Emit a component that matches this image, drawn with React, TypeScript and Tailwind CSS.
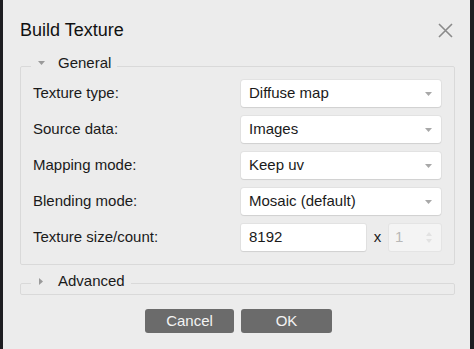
import React from "react";

const rows = [
  { label: "Texture type:", value: "Diffuse map" },
  { label: "Source data:", value: "Images" },
  { label: "Mapping mode:", value: "Keep uv" },
  { label: "Blending mode:", value: "Mosaic (default)" },
];

function DownArrow({ color = "#a8a8a8" }: { color?: string }) {
  return (
    <svg width="7" height="4" viewBox="0 0 7 4">
      <path d="M0 0 L7 0 L3.5 4 Z" fill={color} />
    </svg>
  );
}

function Combo({ value }: { value: string }) {
  return (
    <div className="h-[27px] w-[200px] flex items-center justify-between rounded-[3px] bg-white pl-[8px] pr-[9px] shadow-[0_0_0_1px_rgba(0,0,0,0.04),0_1px_1px_rgba(0,0,0,0.08)]">
      <span className="text-[15px] text-[#1a1a1a]">{value}</span>
      <DownArrow />
    </div>
  );
}

export default function App() {
  return (
    <div
      className="w-[474px] h-[349px] flex bg-[#1d1d21] overflow-hidden"
      style={{ fontFamily: '"Liberation Sans", Arial, sans-serif' }}
    >
      <div className="w-[3px] shrink-0" />
      <div className="flex-1 flex flex-col bg-[#ececec] pl-[17px] pr-[15px]">
        {/* 标题栏 */}
        <div className="mt-[19px] h-[22px] flex items-center justify-between pr-[2px]">
          <span className="text-[18px] leading-[22px] text-[#111]">Build Texture</span>
          <svg width="15" height="15" viewBox="0 0 15 15" className="mt-[1px]">
            <path d="M1 1 L14 14 M14 1 L1 14" stroke="#8a8a8a" strokeWidth="1.6" />
          </svg>
        </div>

        {/* General */}
        <fieldset className="mt-[13px] border border-[#d9d9d9] rounded-[2px]">
          <legend className="ml-[10px] pl-[7px] pr-[6px] pb-[6px] flex items-center">
            <DownArrow color="#9a9a9a" />
            <span className="ml-[13px] text-[15px] leading-[18px] text-[#1a1a1a]">General</span>
          </legend>
          <div className="flex flex-col gap-[9px] pl-[12px] pr-[13px] pt-[2px] pb-[13px]">
            {rows.map((r) => (
              <div key={r.label} className="flex items-center">
                <span className="flex-1 text-[15px] text-[#1a1a1a]">{r.label}</span>
                <Combo value={r.value} />
              </div>
            ))}
            <div className="flex items-center">
              <span className="flex-1 text-[15px] text-[#1a1a1a]">Texture size/count:</span>
              <div className="w-[200px] flex items-center">
                <div className="h-[27px] w-[125px] flex items-center rounded-[2px] bg-white pl-[8px] shadow-[0_0_0_1px_rgba(0,0,0,0.04),0_1px_1px_rgba(0,0,0,0.08)]">
                  <span className="text-[15px] text-[#1a1a1a]">8192</span>
                </div>
                <span className="w-[23px] text-center text-[15px] text-[#1a1a1a]">x</span>
                <div className="h-[27px] w-[52px] flex items-center justify-between rounded-[2px] bg-[#f4f4f4] pl-[6px] pr-[9px] shadow-[0_0_0_1px_rgba(0,0,0,0.03)]">
                  <span className="text-[15px] text-[#b8b8b8]">1</span>
                  <div className="flex flex-col gap-[3px]">
                    <svg width="6" height="4" viewBox="0 0 6 4">
                      <path d="M0 4 L6 4 L3 0 Z" fill="#e2e2e2" />
                    </svg>
                    <svg width="6" height="4" viewBox="0 0 6 4">
                      <path d="M0 0 L6 0 L3 4 Z" fill="#e2e2e2" />
                    </svg>
                  </div>
                </div>
              </div>
            </div>
          </div>
        </fieldset>

        {/* Advanced */}
        <fieldset className="mt-[7px] border border-[#d9d9d9] rounded-[2px]">
          <legend className="ml-[10px] pl-[7px] pr-[6px] pb-[4px] flex items-center">
            <svg width="4" height="7" viewBox="0 0 4 7" className="ml-[1px]">
              <path d="M0 0 L4 3.5 L0 7 Z" fill="#9a9a9a" />
            </svg>
            <span className="ml-[15px] text-[15px] leading-[18px] text-[#1a1a1a]">Advanced</span>
          </legend>
        </fieldset>

        {/* 按钮 */}
        <div className="mt-[14px] flex justify-center gap-[7px] pl-[2px]">
          <button className="h-[24px] w-[89px] rounded-[3px] bg-[#6b6b6b] text-[15px] text-[#f3f3f3]">
            Cancel
          </button>
          <button className="h-[24px] w-[91px] rounded-[3px] bg-[#6b6b6b] text-[15px] text-[#f3f3f3]">
            OK
          </button>
        </div>
      </div>
      <div className="w-[4px] shrink-0" />
    </div>
  );
}
